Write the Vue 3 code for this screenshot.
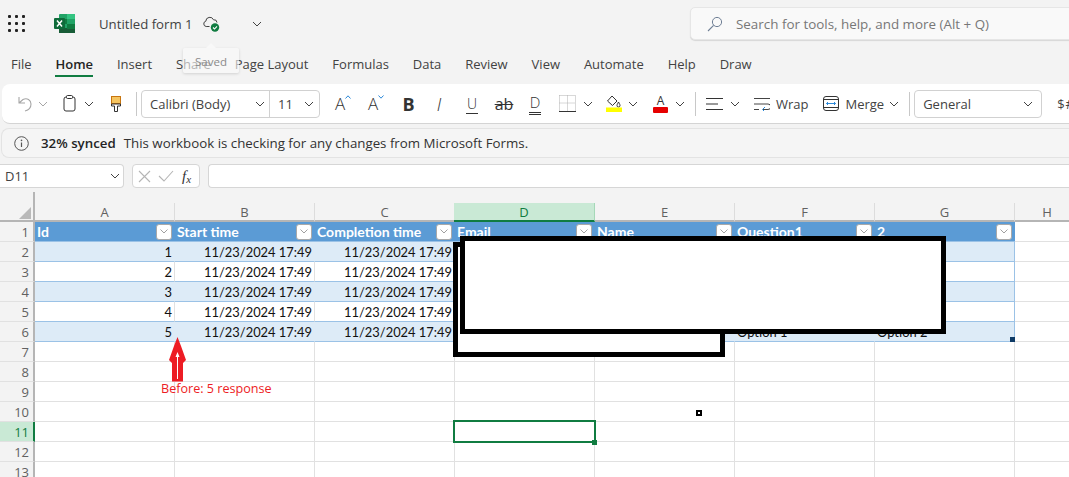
<script setup>
const menus = ['File', 'Home', 'Insert', 'Share', 'Page Layout', 'Formulas', 'Data', 'Review', 'View', 'Automate', 'Help', 'Draw']
const letters = ['A', 'B', 'C', 'D', 'E', 'F', 'G']
const heads = ['Id', 'Start time', 'Completion time', 'Email', 'Name', 'Question1', '2']
const stamp = '11/23/2024 17:49'
const rows = [1, 2, 3, 4, 5].map((n) => ({
  n,
  cells: [
    { t: String(n), r: true },
    { t: stamp, r: true },
    { t: stamp, r: true },
    { t: '' },
    { t: '' },
    { t: n === 5 ? 'Option 1' : '' },
    { t: n === 5 ? 'Option 2' : '' }
  ]
}))
const emptyRows = [7, 8, 9, 10, 11, 12, 13]
</script>

<template>
  <div class="app">
    <header class="top">
      <svg class="waffle" width="17" height="17" viewBox="0 0 17 17">
        <g fill="#222">
          <rect x="0" y="0" width="3" height="3" rx="1" /><rect x="7" y="0" width="3" height="3" rx="1" /><rect x="14" y="0" width="3" height="3" rx="1" />
          <rect x="0" y="7" width="3" height="3" rx="1" /><rect x="7" y="7" width="3" height="3" rx="1" /><rect x="14" y="7" width="3" height="3" rx="1" />
          <rect x="0" y="14" width="3" height="3" rx="1" /><rect x="7" y="14" width="3" height="3" rx="1" /><rect x="14" y="14" width="3" height="3" rx="1" />
        </g>
      </svg>
      <svg class="xl" width="21" height="19" viewBox="0 0 21 19">
        <rect x="5" y="0" width="16" height="19" rx="1" fill="#21a366" />
        <rect x="13" y="0" width="8" height="5" fill="#33c481" />
        <rect x="5" y="5" width="8" height="5" fill="#107c41" />
        <rect x="13" y="10" width="8" height="5" fill="#107c41" />
        <rect x="5" y="14" width="8" height="5" fill="#185c37" />
        <rect x="13" y="15" width="8" height="4" fill="#185c37" />
        <rect x="0" y="4" width="11" height="11" rx="1" fill="#0e6b3a" />
        <path d="M3 6.5 L8 12.5 M8 6.5 L3 12.5" stroke="#fff" stroke-width="1.5" fill="none" />
      </svg>
      <span class="title">Untitled form 1</span>
      <svg class="cloud" width="17" height="17" viewBox="0 0 17 17">
        <path d="M6.5 11.5 H3.2 A2.7 2.7 0 0 1 2.8 6.2 A4 4 0 0 1 10.5 4.8 A3 3 0 0 1 14 7.5" fill="none" stroke="#424242" stroke-width="1" />
        <circle cx="12" cy="12.5" r="4.2" fill="#107c41" />
        <path d="M10 12.5 L11.5 14 L14 11.3" fill="none" stroke="#fff" stroke-width="1.1" />
      </svg>
      <svg class="chev title-chev" width="10" height="6" viewBox="0 0 10 6"><path d="M1 1 L5 5 L9 1" /></svg>
      <div class="search">
        <svg class="search-ico" width="16" height="16" viewBox="0 0 16 16">
          <circle cx="10" cy="6" r="4.6" fill="none" stroke="#6f7f95" stroke-width="1" />
          <path d="M6.6 9.4 L1 15" stroke="#6f7f95" stroke-width="1.1" />
        </svg>
        <span>Search for tools, help, and more (Alt + Q)</span>
      </div>
    </header>

    <nav class="menu">
      <span v-for="m in menus" :key="m" class="menu-item" :class="{ active: m === 'Home' }">{{ m }}</span>
    </nav>

    <section class="ribbon">
      <svg class="i undo" width="14" height="16" viewBox="0 0 14 16"><path d="M1 1 V7 H7 M1 7 L5 3.5 C9 1.5 13 4 13 8 C13 11 11 14 7 15" fill="none" stroke="#a6a6a6" stroke-width="1.1" /></svg>
      <svg class="chev grey m6" width="10" height="6" viewBox="0 0 10 6"><path d="M1 1 L5 5 L9 1" /></svg>
      <svg class="i m15" width="13" height="17" viewBox="0 0 13 17"><rect x="1" y="2" width="11" height="14" rx="2" fill="none" stroke="#333" stroke-width="1" /><rect x="3.5" y="0.5" width="6" height="3" rx="1" fill="#fff" stroke="#333" stroke-width="1" /></svg>
      <svg class="chev m8" width="10" height="6" viewBox="0 0 10 6"><path d="M1 1 L5 5 L9 1" /></svg>
      <svg class="i m17" width="10" height="16" viewBox="0 0 10 16"><rect x="0.5" y="0.5" width="9" height="7" fill="#f6c560" stroke="#c8750f" /><path d="M0.5 8 H9.5 V10 H6.5 V15.5 H3.5 V10 H0.5 Z" fill="#fff" stroke="#333" stroke-width="1" /></svg>
      <span class="sep s15"></span>
      <div class="combo font">
        <span class="box-l">Calibri (Body)</span>
        <svg class="chev" width="10" height="6" viewBox="0 0 10 6"><path d="M1 1 L5 5 L9 1" /></svg>
        <span class="combo-div"></span>
        <span class="box-s">11</span>
        <svg class="chev" width="10" height="6" viewBox="0 0 10 6"><path d="M1 1 L5 5 L9 1" /></svg>
      </div>
      <span class="size-a first">A<svg width="6" height="4" viewBox="0 0 6 4"><path d="M0.5 3.5 L3 0.8 L5.5 3.5" fill="none" stroke="#2b88d8" /></svg></span>
      <span class="size-a">A<svg width="6" height="4" viewBox="0 0 6 4"><path d="M0.5 0.5 L3 3.2 L5.5 0.5" fill="none" stroke="#2b88d8" /></svg></span>
      <span class="fmt b">B</span>
      <span class="fmt it">I</span>
      <span class="fmt u">U</span>
      <span class="fmt ab">ab</span>
      <span class="fmt dbl">D</span>
      <svg class="i m18" width="17" height="17" viewBox="0 0 17 17">
        <path d="M0.5 0.5 H16.5 V16 M0.5 0.5 V16 M8.5 0.5 V16 M0.5 8 H16.5" fill="none" stroke="#b0b0b0" stroke-dasharray="1 1" />
        <path d="M0 16.5 H17" stroke="#333" />
      </svg>
      <svg class="chev m7" width="10" height="6" viewBox="0 0 10 6"><path d="M1 1 L5 5 L9 1" /></svg>
      <svg class="i m13" width="16" height="17" viewBox="0 0 16 17">
        <path d="M6 1 L11 6 L6.5 10.5 L1.5 6 Z" fill="none" stroke="#333" />
        <path d="M12.5 7 C11.5 9 11 9.5 11 10.5 A1.5 1.5 0 0 0 14 10.5 C14 9.5 13.5 9 12.5 7 Z" fill="none" stroke="#333" />
        <rect x="0" y="12.5" width="16" height="4.5" fill="#ffff00" />
      </svg>
      <svg class="chev m6" width="10" height="6" viewBox="0 0 10 6"><path d="M1 1 L5 5 L9 1" /></svg>
      <span class="color-a m15">A<i></i></span>
      <svg class="chev m7" width="10" height="6" viewBox="0 0 10 6"><path d="M1 1 L5 5 L9 1" /></svg>
      <span class="sep s10"></span>
      <svg class="i m11" width="17" height="14" viewBox="0 0 17 14"><path d="M0 1.5 H17 M0 7 H12 M0 12.5 H17" stroke="#333" /></svg>
      <svg class="chev m7" width="10" height="6" viewBox="0 0 10 6"><path d="M1 1 L5 5 L9 1" /></svg>
      <svg class="i m14" width="16" height="14" viewBox="0 0 16 14">
        <path d="M0 1.5 H16 M0 7 H14 A2.5 2.5 0 0 1 14 12.5 H9 M0 12.5 H5" fill="none" stroke="#444" />
        <path d="M11 10 L8.5 12.5 L11 15" fill="none" stroke="#2b88d8" />
      </svg>
      <span class="label m6">Wrap</span>
      <svg class="i m14" width="16" height="15" viewBox="0 0 16 15">
        <rect x="0.5" y="0.5" width="15" height="14" rx="2.5" fill="none" stroke="#333" />
        <path d="M0.5 3.5 H15.5 M0.5 11.5 H15.5" stroke="#333" />
        <path d="M3.5 7.5 H12.5 M5 6 L3.5 7.5 L5 9 M11 6 L12.5 7.5 L11 9" fill="none" stroke="#2b88d8" />
      </svg>
      <span class="label m7">Merge</span>
      <svg class="chev m5" width="10" height="6" viewBox="0 0 10 6"><path d="M1 1 L5 5 L9 1" /></svg>
      <span class="sep s10"></span>
      <div class="combo general">
        <span class="box-l">General</span>
        <svg class="chev" width="10" height="6" viewBox="0 0 10 6"><path d="M1 1 L5 5 L9 1" /></svg>
      </div>
      <span class="label dollar">$<span>#</span></span>
    </section>

    <section class="info">
      <svg width="15" height="15" viewBox="0 0 15 15">
        <circle cx="7.5" cy="7.5" r="6.8" fill="none" stroke="#555" />
        <path d="M7.5 6.5 V11" stroke="#555" stroke-width="1.2" />
        <circle cx="7.5" cy="4.4" r="0.8" fill="#555" />
      </svg>
      <strong>32% synced</strong>
      <span>This workbook is checking for any changes from Microsoft Forms.</span>
    </section>

    <section class="formula">
      <div class="namebox">
        <span>D11</span>
        <svg class="chev" width="10" height="6" viewBox="0 0 10 6"><path d="M1 1 L5 5 L9 1" /></svg>
      </div>
      <div class="fx">
        <svg width="13" height="13" viewBox="0 0 13 13"><path d="M1 1 L12 12 M12 1 L1 12" stroke="#b5b5b5" stroke-width="1.1" /></svg>
        <svg width="16" height="12" viewBox="0 0 16 12"><path d="M1 6 L6 11 L15 1" fill="none" stroke="#b5b5b5" stroke-width="1.1" /></svg>
        <span class="fx-text">f<sub>x</sub></span>
      </div>
      <div class="input"></div>
    </section>

    <section class="sheet">
      <div class="corner"><i></i></div>
      <div v-for="l in letters" :key="l" class="col" :class="{ sel: l === 'D' }"><span>{{ l }}</span></div>
      <div class="col col-h"><span>H</span></div>

      <div class="rh">1</div>
      <div v-for="h in heads" :key="h" class="th">
        <span>{{ h }}</span>
        <b class="filter"><svg width="8" height="5" viewBox="0 0 8 5"><path d="M0.5 0.5 L4 4 L7.5 0.5" fill="none" stroke="#888" stroke-width="0.8" /></svg></b>
      </div>
      <div class="td-h"></div>

      <template v-for="row in rows" :key="row.n">
        <div class="rh">{{ row.n + 1 }}</div>
        <div
          v-for="(c, i) in row.cells"
          :key="i"
          class="td"
          :class="{ band: row.n % 2 === 1, num: c.r, last: i === 6 }"
        >{{ c.t }}</div>
        <div class="td-h"></div>
      </template>

      <template v-for="n in emptyRows" :key="n">
        <div class="rh" :class="{ 'rh-sel': n === 11 }">{{ n }}</div>
        <div v-for="l in letters" :key="l" class="empty"></div>
        <div class="td-h"></div>
      </template>
    </section>

    <div class="tooltip"><i></i><span>Saved</span></div>

    <div class="redact outer"></div>
    <div class="redact inner"></div>

    <span class="table-grip"></span>
    <div class="cursor-box"></div>
    <div class="sel-box"><i></i></div>

    <svg class="arrow" width="19" height="46" viewBox="0 0 19 46">
      <path d="M9.5 0 L13 9 L18 23 L15 26 V44.5 H4 V26 L1 23 L6 9 Z" fill="#ed1c24" />
      <path d="M9.5 15 L11.5 20 H10 V42 H9 V20 H7.5 Z" fill="#fff" />
    </svg>
    <span class="note">Before: 5 response</span>
  </div>
</template>

<style>
html, body { margin: 0; background: #f3f3f3; }
</style>

<style scoped>
.app {
  position: relative;
  width: 1069px;
  height: 477px;
  overflow: hidden;
  background: #f3f3f3;
  font-family: "Open Sans", "Noto Sans", sans-serif;
  color: #424242;
  font-size: 13px;
}
.chev { flex: none; }
.chev path { fill: none; stroke: #424242; stroke-width: 1; }
.chev.grey path { stroke: #a6a6a6; }

.top { height: 47px; display: flex; align-items: center; box-sizing: border-box; padding-left: 8px; }
.waffle { flex: none; }
.xl { margin-left: 29px; flex: none; }
.title { margin-left: 24px; flex: none; font-size: 13.2px; width: 94px; white-space: nowrap; }
.cloud { margin-left: 10px; flex: none; }
.title-chev { margin-left: 32px; }
.search {
  margin-left: 428px;
  flex: none;
  width: 400px;
  height: 33px;
  box-sizing: border-box;
  background: #f9f9f9;
  border: 1px solid #e6e6e6;
  border-radius: 5px;
  box-shadow: 0 1px 1px rgba(0, 0, 0, .12);
  display: flex;
  align-items: center;
  padding-left: 16px;
  color: #777;
  font-size: 13.4px;
}
.search-ico { margin-right: 13px; }

.menu { height: 37px; display: flex; gap: 23.9px; padding-left: 11px; font-size: 13px; box-sizing: border-box; padding-top: 7px; }
.menu-item { height: 23px; line-height: 20px; color: #424242; white-space: nowrap; }
.menu-item.active { font-weight: 600; color: #242424; border-bottom: 2px solid #107c41; box-sizing: border-box; height: 23px; }

.ribbon {
  height: 40px;
  margin-left: 2px;
  box-sizing: border-box;
  padding-left: 16px;
  background: #fff;
  border-radius: 8px 0 0 8px;
  border-bottom: 1px solid #d4d4d4;
  display: flex;
  align-items: center;
  white-space: nowrap;
  overflow: hidden;
}
.ribbon > * { flex: none; }
.m5 { margin-left: 5px; } .m6 { margin-left: 6px; } .m7 { margin-left: 7px; } .m8 { margin-left: 8px; }
.m11 { margin-left: 10px; } .m13 { margin-left: 13px; } .m14 { margin-left: 14px; } .m15 { margin-left: 15px; } .m17 { margin-left: 17px; } .m18 { margin-left: 18px; }
.sep { width: 1px; height: 24px; background: #c8c8c8; }
.s15 { margin-left: 15px; } .s10 { margin-left: 10px; }
.combo {
  height: 28px;
  box-sizing: border-box;
  border: 1px solid #d1d1d1;
  border-radius: 4px;
  display: flex;
  align-items: center;
  font-size: 13px;
}
.combo.font { width: 179px; margin-left: 4px; }
.combo.font .box-l { width: 113px; padding-left: 8px; box-sizing: border-box; white-space: nowrap; }
.combo-div { width: 1px; height: 26px; background: #d1d1d1; margin-left: 4px; }
.box-s { width: 34px; padding-left: 8px; box-sizing: border-box; }
.combo.general { width: 128px; margin-left: 4px; justify-content: space-between; padding: 0 8px; }
.size-a { font-size: 17px; font-weight: 300; line-height: 20px; width: 18px; display: flex; color: #333; margin-left: 15px; }
.size-a.first { margin-left: 15px; }
.size-a svg { margin-top: 1px; }
.fmt { width: 14px; text-align: center; color: #333; line-height: 22px; }
.fmt.b { font-weight: 700; font-size: 18px; margin-left: 16px; width: 13px; }
.fmt.it { font-style: italic; font-weight: 300; font-size: 18px; margin-left: 17px; }
.fmt.u { font-size: 14px; font-weight: 300; margin-left: 20px; width: 12px; }
.fmt.u::after { content: ""; display: block; height: 1px; background: #333; margin-top: -2px; }
.fmt.ab { font-size: 16px; margin-left: 16px; width: 20px; text-decoration: line-through; }
.fmt.dbl { font-size: 15px; font-weight: 300; margin-left: 15px; width: 12px; border-bottom: 3px double #333; line-height: 19px; }
.color-a { width: 15px; text-align: center; font-size: 12px; line-height: 11px; color: #333; display: block; }
.color-a i { display: block; height: 6px; background: #e60000; border-radius: 1px; margin-top: 1px; }
.label { font-size: 13px; }
.dollar { margin-left: 15px; }
.dollar span { margin-left: 1px; }

.info {
  height: 30px;
  margin: 4px 0 0 1px;
  box-sizing: border-box;
  border: 1px solid #e3e3e3;
  border-right: 0;
  border-radius: 8px 0 0 8px;
  background: #f5f5f5;
  display: flex;
  align-items: center;
  padding-left: 12px;
  font-size: 13.3px;
  color: #323232;
  white-space: nowrap;
}
.info strong { font-weight: 600; margin-left: 12px; color: #242424; }
.info span { margin-left: 8px; }

.formula { height: 24px; margin-top: 6px; display: flex; }
.namebox {
  width: 124px;
  box-sizing: border-box;
  background: #fff;
  border: 1px solid #d6d6d6;
  border-left: 0;
  border-radius: 0 4px 4px 0;
  display: flex;
  align-items: center;
  justify-content: space-between;
  padding: 0 3px 0 5px;
  font-size: 13px;
}
.fx {
  margin-left: 8px;
  width: 68px;
  box-sizing: border-box;
  background: #fff;
  border: 1px solid #d6d6d6;
  border-radius: 4px;
  display: flex;
  align-items: center;
  padding-left: 5px;
  gap: 7px;
}
.fx-text { font-family: "Liberation Serif", serif; font-style: italic; font-size: 15px; margin-left: 1px; color: #333; line-height: 16px; }
.fx-text sub { font-size: 11px; line-height: 0; vertical-align: -2px; }
.input { margin-left: 8px; flex: 1; background: #fff; border: 1px solid #d6d6d6; border-right: 0; border-radius: 4px 0 0 4px; }

.sheet {
  margin-top: 4px;
  display: grid;
  grid-template-columns: 35px repeat(7, 140px) 64px;
  grid-auto-rows: 20px;
  grid-template-rows: 30px;
  font-family: Lato, "Liberation Sans", sans-serif;
  font-size: 12.9px;
  color: #111;
}
.corner {
  border-right: 2px solid #b5b5b5;
  border-bottom: 2px solid #b5b5b5;
  box-sizing: border-box;
  position: relative;
}
.corner i {
  position: absolute;
  right: 2px;
  bottom: 1px;
  width: 0;
  height: 0;
  border-left: 12px solid transparent;
  border-bottom: 12px solid #b9b9b9;
}
.col {
  margin-top: 11px;
  box-sizing: border-box;
  border-right: 1px solid #dcdcdc;
  border-bottom: 2px solid #b5b5b5;
  display: flex;
  align-items: center;
  justify-content: center;
  padding-top: 1px;
  font-family: "Open Sans", sans-serif;
  font-size: 13px;
  color: #616161;
}
.col.col-h { border-right: 0; }
.col.sel { background: #c9e9d5; color: #107c41; border-bottom-color: #107c41; border-right-color: #a5d8b8; margin-left: -1px; }
.rh {
  background: #f3f3f3;
  border-right: 2px solid #b5b5b5;
  border-bottom: 1px solid #e1e1e1;
  box-sizing: border-box;
  text-align: right;
  padding-right: 4px;
  font-family: "Open Sans", sans-serif;
  font-size: 13px;
  line-height: 21px;
  color: #616161;
}
.rh-sel { background: #c9e9d5; border-right-color: #107c41; color: #107c41; }
.th {
  background: #5b9bd5;
  color: #fff;
  font-weight: 700;
  box-sizing: border-box;
  display: flex;
  align-items: center;
  justify-content: space-between;
  padding: 0 3px 0 2px;
  font-size: 14px;
  border-bottom: 1px solid #9bc2e6;
  white-space: nowrap;
}
.filter {
  width: 16px;
  height: 16px;
  box-sizing: border-box;
  background: #fff;
  border: 1px solid #a9a9a9;
  border-radius: 3px;
  display: flex;
  align-items: center;
  justify-content: center;
}
.td {
  box-sizing: border-box;
  background: #fff;
  border-bottom: 1px solid #9bc2e6;
  border-right: 1px solid #e1e1e1;
  padding: 0 2px;
  line-height: 21px;
  white-space: nowrap;
  overflow: hidden;
}
.td.band { background: #ddebf7; border-right-color: #ddebf7; }
.td.num { text-align: right; }
.td.last { border-right-color: #9bc2e6; }
.td-h { background: #fff; border-bottom: 1px solid #e1e1e1; box-sizing: border-box; }
.empty { background: #fff; border-right: 1px solid #e1e1e1; border-bottom: 1px solid #e1e1e1; box-sizing: border-box; }

.tooltip {
  position: absolute;
  left: 183px;
  top: 48px;
  width: 56px;
  height: 25px;
  box-sizing: border-box;
  background: rgba(249, 249, 249, .62);
  border-radius: 2px;
  box-shadow: 0 1px 3px rgba(0, 0, 0, .14);
  font-size: 11.5px;
  color: #8a8a8a;
  text-align: center;
  line-height: 27px;
}
.tooltip i {
  position: absolute;
  left: 23px;
  top: -5px;
  width: 0;
  height: 0;
  border-left: 5px solid transparent;
  border-right: 5px solid transparent;
  border-bottom: 5px solid #f8f8f8;
}
.redact { position: absolute; box-sizing: border-box; background: #fff; border: 5px solid #000; }
.outer { left: 453px; top: 242px; width: 272px; height: 115px; }
.inner { left: 460px; top: 236px; width: 486px; height: 98px; }
.table-grip { position: absolute; left: 1010px; top: 337px; width: 5px; height: 5px; background: #0f3b66; }
.cursor-box { position: absolute; left: 696px; top: 410px; width: 6px; height: 6px; box-sizing: border-box; background: #fff; border: 2px solid #000; }
.sel-box { position: absolute; left: 453px; top: 420px; width: 143px; height: 23px; box-sizing: border-box; border: 2px solid #107c41; }
.sel-box i { position: absolute; right: -3px; bottom: -4px; width: 5px; height: 5px; background: #107c41; }
.arrow { position: absolute; left: 168px; top: 337px; }
.note { position: absolute; left: 161px; top: 380px; font-size: 12.6px; line-height: 17px; color: #ed1c24; white-space: nowrap; }
</style>
